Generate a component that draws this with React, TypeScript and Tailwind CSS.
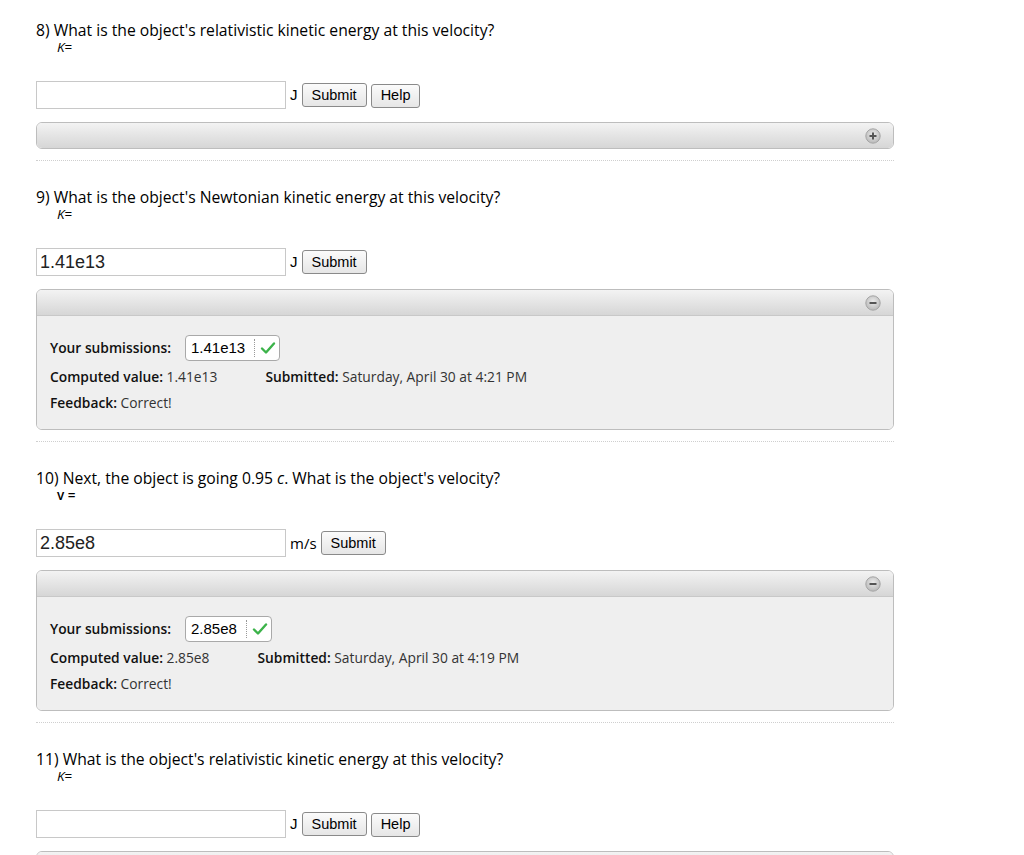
import React from "react";

const qFont = { fontFamily: "'Open Sans', Lato, sans-serif" };
const arial = { fontFamily: "'Liberation Sans', Arial, sans-serif" };

function Check() {
  return (
    <svg width="16" height="14" viewBox="0 0 16 14" className="ml-[5px]">
      <path d="M2 7.5 L6 11.5 L14 2.5" fill="none" stroke="#3cb34a" strokeWidth="2.4" strokeLinecap="round" strokeLinejoin="round" />
    </svg>
  );
}

function ToggleIcon({ open }: { open: boolean }) {
  return (
    <svg width="16" height="16" viewBox="0 0 16 16">
      <defs>
        <radialGradient id={open ? "gmin" : "gplus"} cx="50%" cy="40%" r="60%">
          <stop offset="0%" stopColor="#ececec" />
          <stop offset="100%" stopColor="#b8b8b8" />
        </radialGradient>
      </defs>
      <circle cx="8" cy="8" r="7.2" fill={`url(#${open ? "gmin" : "gplus"})`} stroke="#a5a5a5" strokeWidth="1" />
      <rect x="4.5" y="7" width="7" height="2" fill="#555" />
      {!open && <rect x="7" y="4.5" width="2" height="7" fill="#555" />}
    </svg>
  );
}

function Btn({ label }: { label: string }) {
  return (
    <button className="h-[24px] px-[9px] rounded-[3px] border border-[#8a8a8a] bg-gradient-to-b from-[#fbfbfb] to-[#e6e6e6] text-[14.5px] text-black leading-none" style={arial}>
      {label}
    </button>
  );
}

type Sub = { value: string; computed: string; submitted: string };

function Panel({ sub }: { sub?: Sub }) {
  return (
    <div className="mt-[13px] w-[858px] rounded-[6px] border border-[#bdbdbd] overflow-hidden">
      <div className="h-[25px] bg-gradient-to-b from-[#f3f3f3] to-[#d6d6d6] flex items-center justify-end pr-[12px]">
        <ToggleIcon open={!!sub} />
      </div>
      {sub && (
        <div className="bg-[#efefef] h-[114px] border-t border-[#c8c8c8] pl-[13px] pt-[19px] text-[13.8px] text-[#333]" style={qFont}>
          <div className="flex items-center h-[26px]">
            <span className="font-semibold text-[#111]">Your submissions:</span>
            <span className="ml-[14px] h-[26px] flex items-center bg-white border border-[#a9a9a9] rounded-[4px] pl-[5px] pr-[3px] text-[15px] text-black" style={arial}>
              {sub.value}
              <span className="ml-[9px] h-[18px] border-l border-dotted border-[#999]" />
              <Check />
            </span>
          </div>
          <div className="flex items-center h-[17px] mt-[8px]">
            <span><b className="font-semibold text-[#111]">Computed value:</b> {sub.computed}</span>
            <span className="ml-[48px]"><b className="font-semibold text-[#111]">Submitted:</b> {sub.submitted}</span>
          </div>
          <div className="h-[17px] mt-[7px]">
            <b className="font-semibold text-[#111]">Feedback:</b> Correct!
          </div>
        </div>
      )}
    </div>
  );
}

function Question({
  num,
  text,
  varLabel,
  unit,
  unitMono,
  value,
  help,
  sub,
  last,
}: {
  num: number;
  text: React.ReactNode;
  varLabel: React.ReactNode;
  unit: string;
  unitMono?: boolean;
  value?: string;
  help?: boolean;
  sub?: Sub;
  last?: boolean;
}) {
  return (
    <div>
      <div className="text-[15.7px] leading-[18px] text-black" style={qFont}>
        {num}) {text}
      </div>
      <div className="pl-[21px] text-[13.5px] leading-[16px] text-black" style={qFont}>
        {varLabel}
      </div>
      <div className="mt-[26px] flex items-center h-[28px]">
        <div className="w-[250px] h-[28px] border border-[#c8c8c8] bg-white flex items-center px-[3px] text-[18px] text-[#222]" style={arial}>
          {value}
        </div>
        <span className="ml-[4px] mr-[4px] text-[15px] text-black" style={unitMono ? qFont : arial}>
          {unit}
        </span>
        <Btn label="Submit" />
        {help && (
          <span className="ml-[4px]">
            <Btn label="Help" />
          </span>
        )}
      </div>
      <Panel sub={sub} />
      {!last && <div className="mt-[11px] mb-[27px] w-[858px] border-t border-dotted border-[#cfcfcf]" />}
    </div>
  );
}

export default function App() {
  return (
    <div className="w-[1024px] h-[855px] overflow-hidden bg-white pl-[36px] pt-[21px]">
      <Question
        num={8}
        text="What is the object's relativistic kinetic energy at this velocity?"
        varLabel={<><i>K</i>=</>}
        unit="J"
        help
      />
      <Question
        num={9}
        text="What is the object's Newtonian kinetic energy at this velocity?"
        varLabel={<><i>K</i>=</>}
        unit="J"
        value="1.41e13"
        sub={{ value: "1.41e13", computed: "1.41e13", submitted: "Saturday, April 30 at 4:21 PM" }}
      />
      <Question
        num={10}
        text={<>Next, the object is going 0.95 <i>c</i>. What is the object's velocity?</>}
        varLabel={<b className="font-semibold">v =</b>}
        unit="m/s"
        unitMono
        value="2.85e8"
        sub={{ value: "2.85e8", computed: "2.85e8", submitted: "Saturday, April 30 at 4:19 PM" }}
      />
      <Question
        num={11}
        text="What is the object's relativistic kinetic energy at this velocity?"
        varLabel={<><i>K</i>=</>}
        unit="J"
        help
        last
      />
    </div>
  );
}
